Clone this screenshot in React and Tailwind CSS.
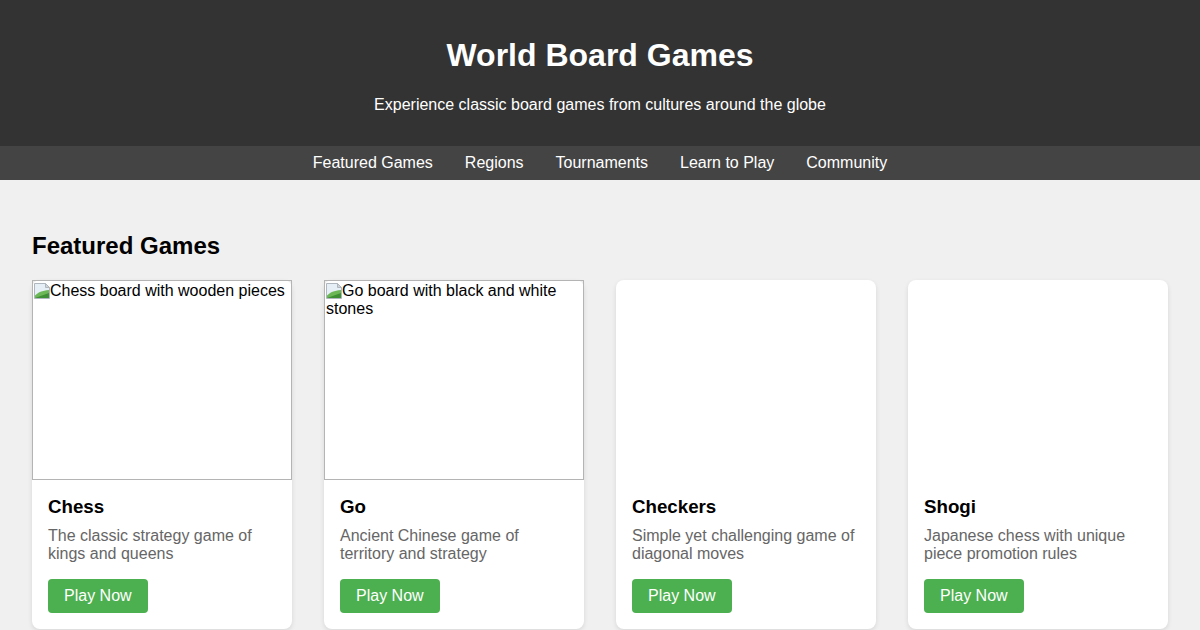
import React from "react";

const games = [
  { name: "Chess", desc: "The classic strategy game of kings and queens", alt: "Chess board with wooden pieces" },
  { name: "Go", desc: "Ancient Chinese game of territory and strategy", alt: "Go board with black and white stones" },
  { name: "Checkers", desc: "Simple yet challenging game of diagonal moves", alt: null },
  { name: "Shogi", desc: "Japanese chess with unique piece promotion rules", alt: null },
];

const navLinks = ["Featured Games", "Regions", "Tournaments", "Learn to Play", "Community"];

// Mimics the browser's broken-image glyph
const BrokenImageIcon = () => (
  <svg width="16" height="16" viewBox="0 0 16 16" className="inline-block align-[-3px] shrink-0">
    <path d="M0.5 0.5h11l4 4v11h-15z" fill="#e6eef6" stroke="#b0b6bd" strokeWidth="1" />
    <path d="M11.5 0.5v4h4z" fill="#cfd3d8" stroke="#b0b6bd" strokeWidth="1" />
    <path d="M1 12.5c3-3 7-5 14-5.5V15H1z" fill="#6cb857" />
    <path d="M1 15l14-5v5z" fill="#3f8f34" />
  </svg>
);

const GameImage = ({ alt }) => {
  if (!alt) return <div className="h-[200px] w-full" />;
  return (
    <div className="h-[200px] w-full border border-[#b4b4b4] px-px pt-px text-[16px] leading-[18px] text-black">
      <BrokenImageIcon />
      {alt}
    </div>
  );
};

export default function App() {
  return (
    <div className="min-h-[630px] bg-[#f0f0f0] font-['Liberation_Sans',Arial,sans-serif]">
      {/* Header */}
      <header className="flex flex-col items-center bg-[#333333] pt-[37px] pb-[32px] text-white">
        <h1 className="mb-[22px] text-[32px] font-bold leading-[37px]">World Board Games</h1>
        <p className="text-[16px] leading-[18px]">Experience classic board games from cultures around the globe</p>
      </header>

      {/* Nav */}
      <nav className="flex h-[34px] items-center justify-center bg-[#444444]">
        {navLinks.map((link) => (
          <a key={link} className="mx-4 text-[16px] leading-[18px] text-white">
            {link}
          </a>
        ))}
      </nav>

      {/* Main */}
      <main className="px-8 pt-8">
        <h2 className="my-[20px] text-[24px] font-bold leading-[28px] text-black">Featured Games</h2>
        <div className="grid grid-cols-4 gap-8">
          {games.map((g) => (
            <div key={g.name} className="rounded-lg bg-white shadow-[0_2px_5px_rgba(0,0,0,0.1)]">
              <GameImage alt={g.alt} />
              <div className="p-4">
                <h3 className="mb-[9px] text-[18.72px] font-bold leading-[22px] text-black">{g.name}</h3>
                <p className="mb-4 text-[16px] leading-[18px] text-[#666666]">{g.desc}</p>
                <button className="rounded bg-[#4caf50] px-4 py-2 text-[16px] leading-[18px] text-white">
                  Play Now
                </button>
              </div>
            </div>
          ))}
        </div>
      </main>
    </div>
  );
}
